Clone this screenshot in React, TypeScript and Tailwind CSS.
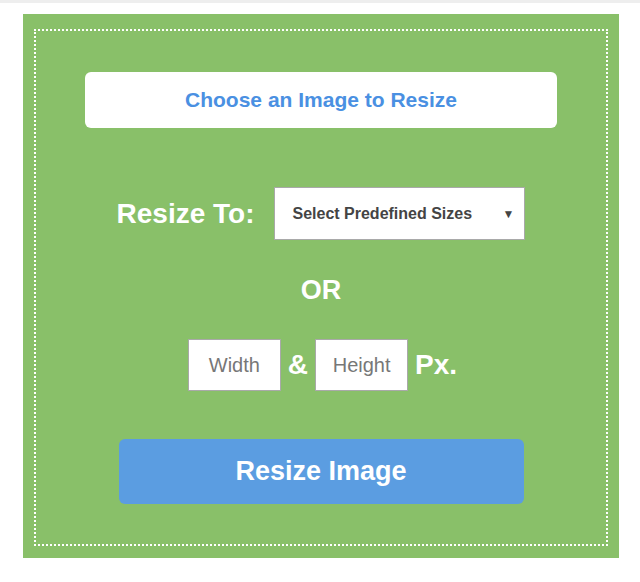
export default function App() {
  return (
    <div className="min-h-[582px] bg-white border-t-[3px] border-[#eeeeee] font-['Liberation_Sans',Arial,sans-serif]">
      <div className="ml-[23px] mt-[11px] w-[596px] bg-[#89c069] pt-[15px] px-[11px] pb-[12px]">
        <div className="flex flex-col items-center border-2 border-dotted border-white pt-[41px] pb-[40px]">
          <button className="flex h-[56px] w-[472px] items-center justify-center rounded-[6px] bg-white text-[21px] font-bold text-[#4a90e2]">
            Choose an Image to Resize
          </button>

          <div className="mt-[59px] flex h-[53px] items-center gap-[20px]">
            <span className="text-[28px] font-bold text-white">Resize To:</span>
            <div className="flex h-[53px] w-[251px] items-center justify-between border border-[#a9a9a9] bg-white pl-[17px] pr-[10px]">
              <span className="text-[16px] font-bold text-[#444]">Select Predefined Sizes</span>
              <span className="text-[12px] text-[#444]">▼</span>
            </div>
          </div>

          <div className="mt-[33px] text-[27px] font-bold leading-[34px] text-white">OR</div>

          <div className="mt-[32px] ml-[3px] flex h-[52px] items-center">
            <input
              placeholder="Width"
              className="h-[52px] w-[93px] border border-[#a9a9a9] bg-white text-center text-[20px] text-[#555] placeholder:text-[#777] outline-none"
            />
            <span className="mx-[7px] text-[28px] font-bold text-white">&amp;</span>
            <input
              placeholder="Height"
              className="h-[52px] w-[93px] border border-[#a9a9a9] bg-white text-center text-[20px] text-[#555] placeholder:text-[#777] outline-none"
            />
            <span className="ml-[7px] text-[28px] font-bold text-white">Px.</span>
          </div>

          <button className="mt-[48px] flex h-[65px] w-[405px] items-center justify-center rounded-[6px] bg-[#5b9de1] text-[27px] font-bold text-white">
            Resize Image
          </button>
        </div>
      </div>
    </div>
  );
}
